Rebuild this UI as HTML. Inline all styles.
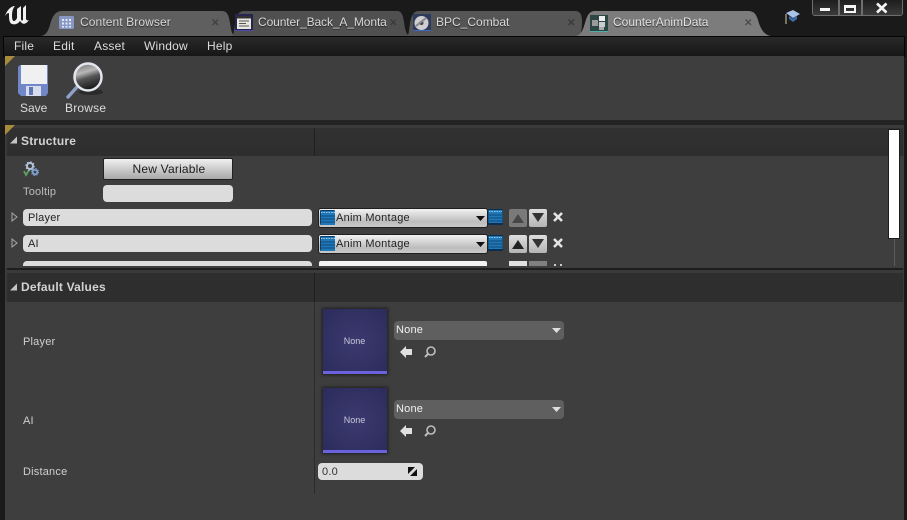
<!DOCTYPE html>
<html><head><meta charset="utf-8">
<style>
html,body{margin:0;padding:0;width:907px;height:520px;overflow:hidden;background:#1a1a1a}
body{position:relative;font-family:"Liberation Sans",sans-serif;font-size:12px;color:#dcdcdc}
.a,.t{position:absolute}
.t{white-space:nowrap;line-height:14px;letter-spacing:.2px}
.tl{color:#d8d8d8;text-shadow:0 1px 1px #222}
.input{position:absolute;background:#dcdcdc;border-radius:4px}
.dk{color:#222}
.combo{position:absolute;left:319px;width:168px;height:18px;border-radius:2px;background:linear-gradient(#f2f2f2,#bdbdbd 70%,#c9c9c9);box-shadow:0 0 0 1px #1f1f1f}
.btn{position:absolute;width:18px;height:18px;border-radius:2px;background:linear-gradient(#dedede,#b4b4b4)}
.thumb{position:absolute;left:323px;width:64px;height:65px;background:radial-gradient(circle at 50% 50%,#3b3a70,#2c2b5c);box-shadow:0 0 3px 1px #1e1e1e}
.thumb i{position:absolute;left:0;right:0;bottom:0;height:3px;background:#6a62dc}
.thumb span{position:absolute;left:-1px;right:0;top:26px;text-align:center;font-size:9px;line-height:12px;color:#c8c8d8}
.sel{position:absolute;left:394px;width:170px;height:19px;background:#5f5f5f;border-radius:4px}
svg{position:absolute;overflow:visible}
</style></head>
<body>
<!-- main panels -->
<div class="a" style="left:4px;top:37px;width:900px;height:19px;background:linear-gradient(#2a2a2a,#171717);box-shadow:0 0 0 1px #050505"></div>
<div class="a" style="left:5px;top:56px;width:899px;height:64px;background:#3e3e3e"></div>
<div class="a" style="left:5px;top:120px;width:899px;height:5px;background:#242424"></div>
<div class="a" style="left:5px;top:125px;width:899px;height:395px;background:#3a3a3a"></div>
<div class="a" style="left:7px;top:128px;width:896px;height:28px;background:linear-gradient(#313131,#2e2e2e)"></div>
<div class="a" style="left:5px;top:156px;width:899px;height:112px;background:#3e3e3e"></div>
<div class="a" style="left:7px;top:268px;width:896px;height:2px;background:#1e1e1e"></div>
<div class="a" style="left:5px;top:270px;width:899px;height:3px;background:#3a3a3a"></div>
<div class="a" style="left:7px;top:273px;width:896px;height:29px;background:#2e2e2e"></div>
<div class="a" style="left:5px;top:302px;width:899px;height:218px;background:#3e3e3e"></div>
<div class="a" style="left:314px;top:128px;width:1px;height:28px;background:#1f1f1f"></div>
<div class="a" style="left:314px;top:273px;width:1px;height:29px;background:#1f1f1f"></div>
<div class="a" style="left:314px;top:302px;width:1px;height:192px;background:#2b2b2b"></div>
<svg style="left:5px;top:56px" width="10" height="10"><path d="M0 0H10L0 10Z" fill="#a88c3c"/></svg>
<svg style="left:5px;top:125px" width="10" height="10"><path d="M0 0H10L0 10Z" fill="#a88c3c"/></svg>

<!-- logo -->
<svg style="left:5px;top:3px" width="24" height="24" viewBox="0 0 24 24"><path d="M0 13C2 7 6 3 10 3C8 5 7 8 7 13C7 17 8 18 9 18C10 18 11 17 12 15V6L16 3V15C16 18 17 18 18 17V5L21 2V15C21 17 22 18 24 17C22 20 19 22 17 20C16 19.500 16 19 15 18C13 21 10 22 7 21C4 20 4 15 4 11C4 9 2 10 0 13Z" fill="#f2f2f2"/></svg>

<!-- tabs -->
<svg style="left:0;top:11px" width="800" height="26" viewBox="0 0 800 26">
<path d="M40 25C46 25 48 20 50 14C52 6 55 0 62 0H222C228 0 229 6 230 12C231 19 232 25 236 25Z" fill="#5f5f5f"/>
<path d="M232 25C234 24 234 19 235 13C236 6 238 0 244 0H397C402 0 403 5 404 11C405 18 406 24 410 25Z" fill="#505050"/>
<path d="M407 25C409 24 409 19 410 13C411 6 413 0 419 0H575C581 0 582 5 582 11C582 18 581 24 579 25Z" fill="#555"/>
<path d="M576 25C581 24 583 19 585 12C587 5 589 0 595 0H748C754 0 756 3 758 9C760 17 764 24 771 25Z" fill="#7c7c7c"/>
</svg>
<!-- tab icons -->
<svg style="left:59px;top:15px" width="16" height="16" viewBox="0 0 16 16"><rect x="0" y="1" width="15" height="13" rx="1.500" fill="#8797c6"/><path d="M3 4h2v2H3zM6.500 4h2v2h-2zM10 4h2v2h-2zM3 7.500h2v2H3zM6.500 7.500h2v2h-2zM10 7.500h2v2h-2zM3 11h2v1.500H3zM6.500 11h2v1.500h-2zM10 11h2v1.500h-2z" fill="#e6eaf5"/></svg>
<svg style="left:235px;top:14px" width="18" height="18" viewBox="0 0 18 18"><rect x="0" y="0" width="18" height="17" fill="#25254f"/><rect x="2" y="2" width="14" height="13" fill="#e8e8e0"/><path d="M2 2h14v2.500H2z" fill="#333"/><path d="M4 7h10M4 9.500h7M4 12h10" stroke="#555" stroke-width="1"/><rect x="0" y="16" width="18" height="1" fill="#4a4ab0"/></svg>
<svg style="left:413px;top:14px" width="18" height="18" viewBox="0 0 18 18"><rect width="18" height="17" fill="#2d3c5c"/><circle cx="8.500" cy="9" r="7" fill="#cfcfd2"/><circle cx="8.500" cy="9" r="2" fill="#444"/><path d="M3 12L13 4" stroke="#888" stroke-width="2"/><rect y="16" width="18" height="1" fill="#3f66c0"/></svg>
<svg style="left:590px;top:15px" width="18" height="17" viewBox="0 0 18 17"><rect width="18" height="17" fill="#2c4644"/><rect x="9" y="1" width="6" height="5" fill="#eee"/><rect x="2" y="5" width="6" height="6" fill="#9a9a9a"/><rect x="9" y="7" width="6" height="5" fill="#ccc"/><rect x="9" y="12" width="5" height="3" fill="#aaa"/><rect y="16" width="18" height="1" fill="#4fb0a8"/></svg>

<div class="t tl" style="left:80px;top:15px;letter-spacing:.1px">Content Browser</div>
<div class="t tl" style="left:258px;top:15px;letter-spacing:-.1px">Counter_Back_A_Monta</div>
<div class="t tl" style="left:436px;top:15px;letter-spacing:0">BPC_Combat</div>
<div class="t tl" style="left:613px;top:15px;color:#e4e4e4;letter-spacing:0">CounterAnimData</div>
<svg style="left:212px;top:19px" width="7" height="7"><path d="M0.500 0.500L6 6M6 0.500L0.500 6" stroke="#3f3f3f" stroke-width="1.300"/></svg>
<svg style="left:390px;top:19px" width="7" height="7"><path d="M0.500 0.500L6 6M6 0.500L0.500 6" stroke="#3a3a3a" stroke-width="1.300"/></svg>
<svg style="left:568px;top:19px" width="7" height="7"><path d="M0.500 0.500L6 6M6 0.500L0.500 6" stroke="#3a3a3a" stroke-width="1.300"/></svg>
<svg style="left:745px;top:19px" width="7" height="7"><path d="M0.500 0.500L6 6M6 0.500L0.500 6" stroke="#4a4a4a" stroke-width="1.300"/></svg>

<!-- cap icon + window buttons -->
<svg style="left:785px;top:9px" width="16" height="16" viewBox="0 0 16 16"><path d="M1 4L8 1L15 5L8 9Z" fill="#a8c4e8"/><path d="M4 7V10L8 13L12 10V7L8 9.500Z" fill="#3d6ca8"/><path d="M1 5V15" stroke="#d8c8a8" stroke-width="1"/></svg>
<div class="a" style="left:813px;top:0;width:25px;height:15px;background:linear-gradient(#1e1e1e,#3a3a3a);box-shadow:0 0 0 1px #6e6e6e;border-radius:0 0 0 2px"></div>
<div class="a" style="left:840px;top:0;width:21px;height:15px;background:linear-gradient(#1e1e1e,#3a3a3a);box-shadow:0 0 0 1px #6e6e6e"></div>
<div class="a" style="left:863px;top:0;width:39px;height:15px;background:linear-gradient(#1e1e1e,#3a3a3a);box-shadow:0 0 0 1px #6e6e6e;border-radius:0 0 2px 0"></div>
<div class="a" style="left:820px;top:8px;width:10px;height:3px;background:#f5f5f5"></div>
<div class="a" style="left:844px;top:5px;width:8px;height:3px;border:2px solid #f5f5f5;border-top-width:3px"></div>
<svg style="left:876px;top:3px" width="12" height="10"><path d="M1 0.500L10.500 9.500M10.500 0.500L1 9.500" stroke="#f5f5f5" stroke-width="2.600"/></svg>

<!-- menu -->
<div class="t" style="left:14px;top:39px">File</div>
<div class="t" style="left:53px;top:39px">Edit</div>
<div class="t" style="left:94px;top:39px">Asset</div>
<div class="t" style="left:144px;top:39px">Window</div>
<div class="t" style="left:207px;top:39px">Help</div>

<!-- toolbar -->
<svg style="left:17px;top:64px" width="34" height="34" viewBox="0 0 34 34"><path d="M1 3L3 1H31V29L29 32H4L1 29Z" fill="#7088c8"/><rect x="4" y="1" width="26" height="19" fill="#f0f0f0"/><rect x="9" y="22" width="15" height="10" fill="#d8dcec"/><rect x="12" y="23" width="4" height="8" fill="#6078b8"/></svg>
<svg style="left:66px;top:62px" width="40" height="38" viewBox="0 0 40 38">
<defs><linearGradient id="gl" x1="0" y1="0" x2=".3" y2="1"><stop offset="0" stop-color="#6a6a6a"/><stop offset=".4" stop-color="#b8b8b8"/><stop offset=".62" stop-color="#555"/><stop offset="1" stop-color="#1c1c1c"/></linearGradient></defs>
<ellipse cx="25" cy="30" rx="12" ry="3" fill="#222" opacity=".7"/><path d="M2 35L11 25" stroke="#8ea0c8" stroke-width="3.500" stroke-linecap="round"/><circle cx="22" cy="15" r="13.500" fill="url(#gl)" stroke="#e4e6ee" stroke-width="2.500"/></svg>
<div class="t" style="left:20px;top:101px;letter-spacing:0">Save</div>
<div class="t" style="left:65px;top:101px">Browse</div>

<!-- Structure -->
<svg style="left:10px;top:136px" width="8" height="8"><path d="M0 7.500L7 0.500V7.500Z" fill="#c4c4c4"/></svg>
<div class="t" style="left:21px;top:134px;font-weight:bold;font-size:12px;color:#d2d2d2">Structure</div>
<svg style="left:23px;top:161px" width="16" height="16" viewBox="0 0 16 16"><path d="M1 10L3 14L6 9" fill="none" stroke="#5fa05f" stroke-width="1.800"/><circle cx="7" cy="5" r="3" fill="none" stroke="#b0c0d8" stroke-width="2"/><circle cx="7" cy="5" r="4.200" fill="none" stroke="#b0c0d8" stroke-width="1.200" stroke-dasharray="1.500 1.800"/><circle cx="12" cy="11" r="2.300" fill="none" stroke="#7c9cc8" stroke-width="2"/><circle cx="12" cy="11" r="3.500" fill="none" stroke="#7c9cc8" stroke-width="1.100" stroke-dasharray="1.300 1.500"/></svg>
<div class="a" style="left:104px;top:159px;width:128px;height:20px;border-radius:1px;background:linear-gradient(#f0f0f0,#a8a8a8);box-shadow:0 0 0 1px #222"></div>
<div class="t" style="left:105px;top:162px;width:128px;text-align:center;color:#1c1c1c">New Variable</div>
<div class="t" style="left:23px;top:185px;font-size:11px;color:#bdbdbd">Tooltip</div>
<div class="input" style="left:103px;top:185px;width:130px;height:17px"></div>

<div class="input" style="left:23px;top:209px;width:289px;height:17px"></div>
<div class="input" style="left:23px;top:235px;width:289px;height:17px"></div>
<div class="input" style="left:23px;top:261px;width:289px;height:5px;border-radius:4px 4px 0 0"></div>
<div class="t dk" style="left:28px;top:211px;font-size:11px">Player</div>
<div class="t dk" style="left:28px;top:237px;font-size:11px">AI</div>
<svg style="left:11px;top:212px" width="8" height="10"><path d="M1 1L6 5L1 9Z" fill="none" stroke="#a8a8a8"/></svg>
<svg style="left:11px;top:238px" width="8" height="10"><path d="M1 1L6 5L1 9Z" fill="none" stroke="#a8a8a8"/></svg>

<div class="combo" style="top:209px"></div>
<div class="combo" style="top:235px"></div>
<div class="a" style="left:319px;top:261px;width:168px;height:5px;background:#f2f2f2;border-radius:2px 2px 0 0"></div>
<svg style="left:320px;top:210px" width="16" height="16" viewBox="0 0 16 16"><rect width="15" height="15" rx="1" fill="#0f3f68"/><rect x="1" y="1" width="14" height="14" fill="#1f78b8"/><path d="M1 2.500h14" stroke="#9cc8e8" stroke-dasharray="1.500 1"/><path d="M1 6h14M1 9h14M1 12h14" stroke="#0f4a78"/></svg>
<svg style="left:320px;top:236px" width="16" height="16" viewBox="0 0 16 16"><rect width="15" height="15" rx="1" fill="#0f3f68"/><rect x="1" y="1" width="14" height="14" fill="#1f78b8"/><path d="M1 2.500h14" stroke="#9cc8e8" stroke-dasharray="1.500 1"/><path d="M1 6h14M1 9h14M1 12h14" stroke="#0f4a78"/></svg>
<div class="t dk" style="left:336px;top:211px;font-size:11px;letter-spacing:.25px">Anim Montage</div>
<div class="t dk" style="left:336px;top:237px;font-size:11px;letter-spacing:.25px">Anim Montage</div>
<svg style="left:476px;top:216px" width="9" height="5"><path d="M0 0H9L4.500 5Z" fill="#111"/></svg>
<svg style="left:476px;top:242px" width="9" height="5"><path d="M0 0H9L4.500 5Z" fill="#111"/></svg>
<svg style="left:488px;top:209px" width="15" height="16" viewBox="0 0 15 16"><rect width="15" height="16" rx="1" fill="#0a2f50"/><rect x="0.500" y="1" width="14" height="13" fill="#1f78b8"/><path d="M1 2.500h13" stroke="#9cc8e8" stroke-dasharray="1.500 1"/><path d="M1 6h13M1 9h13M1 12h13" stroke="#0f4a78"/></svg>
<svg style="left:488px;top:235px" width="15" height="16" viewBox="0 0 15 16"><rect width="15" height="16" rx="1" fill="#0a2f50"/><rect x="0.500" y="1" width="14" height="13" fill="#1f78b8"/><path d="M1 2.500h13" stroke="#9cc8e8" stroke-dasharray="1.500 1"/><path d="M1 6h13M1 9h13M1 12h13" stroke="#0f4a78"/></svg>

<div class="btn" style="left:509px;top:209px;background:#7a7a7a"></div>
<div class="btn" style="left:529px;top:209px"></div>
<div class="btn" style="left:509px;top:235px"></div>
<div class="btn" style="left:529px;top:235px"></div>
<div class="a" style="left:509px;top:261px;width:18px;height:5px;background:#e0e0e0"></div>
<div class="a" style="left:529px;top:261px;width:18px;height:5px;background:#808080"></div>
<svg style="left:512px;top:214px" width="12" height="9"><path d="M0 9L6 0L12 9Z" fill="#474747"/></svg>
<svg style="left:532px;top:213px" width="12" height="9"><path d="M0 0H12L6 9Z" fill="#333"/></svg>
<svg style="left:512px;top:240px" width="12" height="9"><path d="M0 9L6 0L12 9Z" fill="#222"/></svg>
<svg style="left:532px;top:239px" width="12" height="9"><path d="M0 0H12L6 9Z" fill="#333"/></svg>
<svg style="left:553px;top:212px" width="10" height="10"><path d="M1 1L9 9M9 1L1 9" stroke="#e4e4e4" stroke-width="2.600"/></svg>
<svg style="left:553px;top:238px" width="10" height="10"><path d="M1 1L9 9M9 1L1 9" stroke="#e4e4e4" stroke-width="2.600"/></svg>
<svg style="left:553px;top:264px" width="10" height="2"><path d="M1 1H3M7 1H9" stroke="#ccc" stroke-width="2"/></svg>

<!-- scrollbar -->
<div class="a" style="left:889px;top:130px;width:10px;height:108px;background:#fff;box-shadow:0 0 0 1px #1d1d1d"></div>
<div class="a" style="left:894px;top:239px;width:1px;height:27px;background:#5a5a5a"></div>

<!-- Default Values -->
<svg style="left:10px;top:283px" width="8" height="8"><path d="M0 7.500L7 0.500V7.500Z" fill="#c4c4c4"/></svg>
<div class="t" style="left:21px;top:280px;font-weight:bold;font-size:12px;color:#d2d2d2">Default Values</div>
<div class="t" style="left:23px;top:335px;font-size:11px;color:#cfcfcf">Player</div>
<div class="t" style="left:23px;top:414px;font-size:11px;color:#cfcfcf">AI</div>
<div class="t" style="left:23px;top:465px;font-size:11px;color:#cfcfcf">Distance</div>

<div class="thumb" style="top:309px"><span>None</span><i></i></div>
<div class="thumb" style="top:388px"><span>None</span><i></i></div>
<div class="sel" style="top:321px"></div>
<div class="sel" style="top:400px"></div>
<div class="t" style="left:396px;top:323px;font-size:11px;color:#f0f0f0">None</div>
<div class="t" style="left:396px;top:402px;font-size:11px;color:#f0f0f0">None</div>
<svg style="left:552px;top:328px" width="9" height="5"><path d="M0 0H9L4.500 5Z" fill="#dedede"/></svg>
<svg style="left:552px;top:407px" width="9" height="5"><path d="M0 0H9L4.500 5Z" fill="#dedede"/></svg>
<svg style="left:400px;top:346px" width="13" height="12"><path d="M0 6L6 0V3H12V9H6V12Z" fill="#e0e0e0"/></svg>
<svg style="left:400px;top:425px" width="13" height="12"><path d="M0 6L6 0V3H12V9H6V12Z" fill="#e0e0e0"/></svg>
<svg style="left:424px;top:346px" width="12" height="12"><circle cx="7" cy="5" r="4" fill="none" stroke="#bdbdbd" stroke-width="1.600"/><path d="M1 11L4 8" stroke="#bdbdbd" stroke-width="2"/></svg>
<svg style="left:424px;top:425px" width="12" height="12"><circle cx="7" cy="5" r="4" fill="none" stroke="#bdbdbd" stroke-width="1.600"/><path d="M1 11L4 8" stroke="#bdbdbd" stroke-width="2"/></svg>

<div class="input" style="left:318px;top:463px;width:105px;height:17px"></div>
<div class="t dk" style="left:322px;top:465px;font-size:11px;color:#333">0.0</div>
<svg style="left:408px;top:467px" width="10" height="10"><path d="M0 0H7L0 7ZM9 2V9H2Z" fill="#111"/></svg>
</body></html>
